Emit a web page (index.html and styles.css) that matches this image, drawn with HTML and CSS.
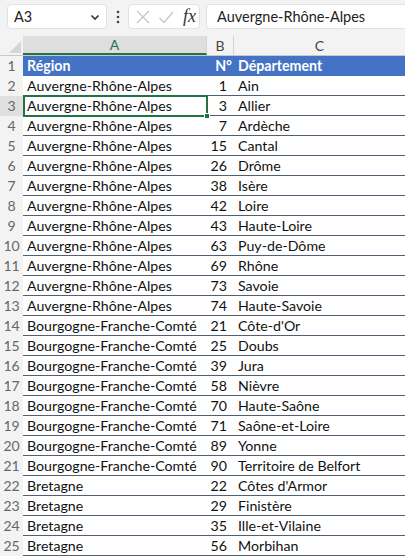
FILE: index.html
```html
<!DOCTYPE html>
<html>
<head>
<meta charset="utf-8">
<link rel="stylesheet" href="styles.css">
</head>
<body>
<div class="app">
  <div class="toolbar">
    <div class="namebox">
      <span class="ref">A3</span>
      <svg class="chev" width="10" height="7" viewBox="0 0 10 7"><path d="M1.5 1.5 L5 5 L8.5 1.5" fill="none" stroke="#333" stroke-width="1.6"/></svg>
    </div>
    <svg class="dots" width="4" height="14" viewBox="0 0 4 14"><circle cx="2" cy="2" r="1.3" fill="#444"/><circle cx="2" cy="7" r="1.3" fill="#444"/><circle cx="2" cy="12" r="1.3" fill="#444"/></svg>
    <div class="fxbox">
      <svg class="ic" width="16" height="16" viewBox="0 0 16 16"><path d="M2 2 L14 14 M14 2 L2 14" stroke="#c4c4c4" stroke-width="1.2" fill="none"/></svg>
      <svg class="ic" width="16" height="16" viewBox="0 0 16 16"><path d="M1.5 9 L6 13.5 L15 3" stroke="#c4c4c4" stroke-width="1.2" fill="none"/></svg>
      <span class="fx">fx</span>
    </div>
    <div class="formula">Auvergne-Rhône-Alpes</div>
  </div>

  <div class="sheet">
    <div class="colheads">
      <div class="corner"></div>
      <div class="ch ch-a sel">A</div>
      <div class="ch ch-b">B</div>
      <div class="ch ch-c">C</div>
    </div>
    <div class="rows" id="rows">
      <div class="row head"><div class="rh">1</div><div class="c a">Région</div><div class="c b hb">N°</div><div class="c cc">Département</div></div>
    </div>
    <div class="selbox"><span class="handle"></span></div>
  </div>
</div>
<script src="app.js"></script>
</body>
</html>
```

FILE: app.js
```js
const data = [
  ["Auvergne-Rhône-Alpes","1","Ain"],
  ["Auvergne-Rhône-Alpes","3","Allier"],
  ["Auvergne-Rhône-Alpes","7","Ardèche"],
  ["Auvergne-Rhône-Alpes","15","Cantal"],
  ["Auvergne-Rhône-Alpes","26","Drôme"],
  ["Auvergne-Rhône-Alpes","38","Isère"],
  ["Auvergne-Rhône-Alpes","42","Loire"],
  ["Auvergne-Rhône-Alpes","43","Haute-Loire"],
  ["Auvergne-Rhône-Alpes","63","Puy-de-Dôme"],
  ["Auvergne-Rhône-Alpes","69","Rhône"],
  ["Auvergne-Rhône-Alpes","73","Savoie"],
  ["Auvergne-Rhône-Alpes","74","Haute-Savoie"],
  ["Bourgogne-Franche-Comté","21","Côte-d'Or"],
  ["Bourgogne-Franche-Comté","25","Doubs"],
  ["Bourgogne-Franche-Comté","39","Jura"],
  ["Bourgogne-Franche-Comté","58","Nièvre"],
  ["Bourgogne-Franche-Comté","70","Haute-Saône"],
  ["Bourgogne-Franche-Comté","71","Saône-et-Loire"],
  ["Bourgogne-Franche-Comté","89","Yonne"],
  ["Bourgogne-Franche-Comté","90","Territoire de Belfort"],
  ["Bretagne","22","Côtes d'Armor"],
  ["Bretagne","29","Finistère"],
  ["Bretagne","35","Ille-et-Vilaine"],
  ["Bretagne","56","Morbihan"]
];
const rows = document.getElementById("rows");
data.forEach((d, i) => {
  const r = document.createElement("div");
  r.className = "row" + (i === 1 ? " selrow" : "");
  r.innerHTML = '<div class="rh">' + (i + 2) + '</div><div class="c a"></div><div class="c b"></div><div class="c cc"></div>';
  r.children[1].textContent = d[0];
  r.children[2].textContent = d[1];
  r.children[3].textContent = d[2];
  rows.appendChild(r);
});
```

FILE: styles.css
```css
* { box-sizing: border-box; }
html, body { margin: 0; padding: 0; }
body {
  width: 405px;
  height: 556px;
  overflow: hidden;
  background: #ffffff;
  font-family: "Lato", "Open Sans", sans-serif;
  color: #000;
}
.app { width: 405px; }

.toolbar {
  height: 36px;
  background: #f3f3f3;
  display: flex;
  align-items: flex-start;
  padding: 4px 0 0 7px;
}
.namebox {
  width: 100px;
  height: 25px;
  background: #fff;
  border: 1px solid #e2e2e2;
  border-radius: 4px;
  display: flex;
  align-items: center;
  justify-content: space-between;
  padding: 0 6px 0 6px;
  font-size: 14.5px;
  color: #222;
}
.chev { margin-top: 1px; }
.dots { margin: 6px 0 0 9px; }
.fxbox {
  margin-left: 8px;
  width: 72px;
  height: 25px;
  background: #fff;
  border: 1px solid #e2e2e2;
  border-radius: 4px;
  display: flex;
  align-items: center;
  padding: 0 0 0 6px;
  gap: 7px;
}
.fx {
  font-family: "Liberation Serif", "DejaVu Serif", serif;
  font-style: italic;
  font-size: 18px;
  color: #333;
  margin-left: 2px;
}
.formula {
  margin-left: 6px;
  flex: 1;
  height: 25px;
  background: #fff;
  border: 1px solid #e2e2e2;
  border-right: none;
  border-radius: 4px 0 0 4px;
  padding-left: 10px;
  font-size: 14.5px;
  line-height: 23px;
  color: #222;
}

.sheet { position: relative; }
.colheads {
  display: flex;
  height: 20px;
  background: #f3f3f3;
  border-bottom: 1px solid #c9c9c9;
}
.corner {
  width: 23px;
  position: relative;
}
.corner::after {
  content: "";
  position: absolute;
  right: 2px;
  bottom: 2px;
  width: 0;
  height: 0;
  border-left: 12px solid transparent;
  border-bottom: 12px solid #d6d6d6;
}
.ch {
  font-size: 14px;
  color: #444;
  text-align: center;
  line-height: 19px;
  border-right: 1px solid #d4d4d4;
}
.ch-a { width: 184px; }
.ch-b { width: 27px; }
.ch-c { flex: 1; border-right: none; }
.ch.sel {
  background: #dedede;
  color: #217346;
  border-bottom: 2px solid #217346;
  line-height: 18px;
}

.row {
  display: flex;
  height: 20px;
  font-size: 14.2px;
  line-height: 19px;
  color: #111;
}
.rh {
  width: 23px;
  background: #f3f3f3;
  color: #666;
  text-align: center;
  font-size: 14px;
}
.row.selrow .rh { background: #e0e0e0; }
.c {
  white-space: nowrap;
  overflow: hidden;
  border-bottom: 1px solid #4f5f74;
}
.a { width: 184px; padding-left: 4px; }
.b { width: 27px; text-align: right; padding-right: 7px; }
.cc { flex: 1; padding-left: 4px; }
.row.head .c {
  background: #4472c4;
  color: #fff;
  font-weight: bold;
  border-bottom: 1px solid #4472c4;
}
.row.head .hb { padding-right: 2px; }

.selbox {
  position: absolute;
  left: 23px;
  top: 59px;
  width: 185px;
  height: 22px;
  border: 2px solid #217346;
}
.handle {
  position: absolute;
  right: -4px;
  bottom: -4px;
  width: 6px;
  height: 6px;
  background: #217346;
  border: 1px solid #fff;
}
```
